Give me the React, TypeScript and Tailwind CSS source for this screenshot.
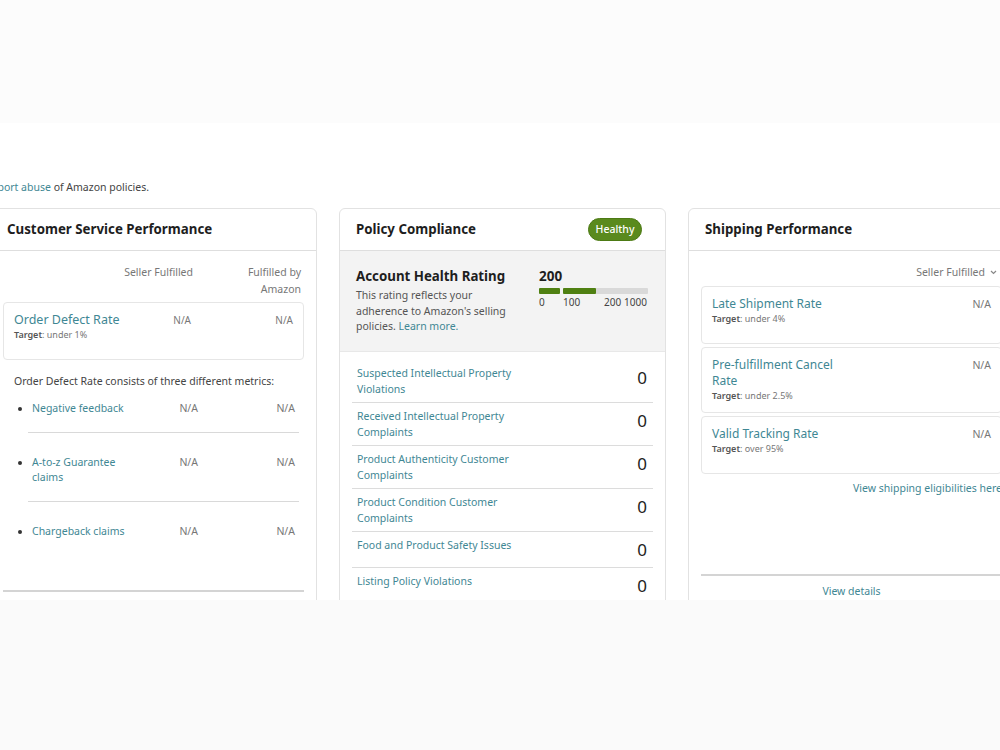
import React from "react";

const link = "text-[#3f8794]";

function Card({ title, right, children }: { title: string; right?: React.ReactNode; children: React.ReactNode }) {
  return (
    <div className="w-[327px] h-[420px] shrink-0 rounded-[6px] border border-[#e2e2e2] bg-white">
      <div className="h-[42px] px-[16px] flex items-center justify-between border-b border-[#dedede]">
        <h2 className="text-[13.3px] font-bold text-[#1e1e1e]">{title}</h2>
        {right}
      </div>
      {children}
    </div>
  );
}

function MetricBox({ name, target, cols }: { name: React.ReactNode; target: string; cols: React.ReactNode }) {
  return (
    <div className="min-h-[58px] rounded-[4px] border border-[#e6e6e6] px-[10px] pt-[9px] pb-[9px] flex items-start">
      <div className="flex-1">
        <div className={`text-[12px] leading-[16px] ${link}`}>{name}</div>
        <div className="text-[9px] leading-[14px] text-[#777]">
          <span className="font-semibold text-[#555]">Target</span>: {target}
        </div>
      </div>
      {cols}
    </div>
  );
}

const subMetrics = [
  { name: "Negative feedback", first: true },
  { name: "A-to-z Guarantee claims", first: false },
  { name: "Chargeback claims", first: false, last: true },
];

const policyRows = [
  "Suspected Intellectual Property Violations",
  "Received Intellectual Property Complaints",
  "Product Authenticity Customer Complaints",
  "Product Condition Customer Complaints",
  "Food and Product Safety Issues",
  "Listing Policy Violations",
];

export default function App() {
  return (
    <div className="w-[1000px] h-[750px] overflow-hidden bg-[#fafafa] font-['Noto_Sans',sans-serif]">
      <div className="h-[123px] bg-[#fcfcfc]" />
      <div className="h-[477px] overflow-hidden bg-white">
        <p className="ml-[-15px] mt-[57px] text-[10.5px] leading-[14px] text-[#444]">
          <span className={link}>Report abuse</span> of Amazon policies.
        </p>

        <div className="ml-[-10px] mt-[14px] flex gap-[22px]">
          {/* Customer service */}
          <Card title="Customer Service Performance">
            <div className="px-[12px]">
              <div className="pt-[13px] mb-[4px] flex justify-end pr-[3px] text-[10.5px] leading-[17px] text-[#777]">
                <div className="w-[90px] text-right">Seller Fulfilled</div>
                <div className="ml-[38px] w-[70px] text-right">Fulfilled by Amazon</div>
              </div>
              <MetricBox
                name={<span className="text-[12.5px]">Order Defect Rate</span>}
                target="under 1%"
                cols={
                  <>
                    <div className="w-[40px] text-right text-[10px] leading-[16px] text-[#777]">N/A</div>
                    <div className="w-[102px] text-right text-[10px] leading-[16px] text-[#777]">N/A</div>
                  </>
                }
              />
              <p className="mt-[14px] pl-[11px] text-[10.5px] leading-[15px] text-[#444]">
                Order Defect Rate consists of three different metrics:
              </p>
              <div className="mr-[5px]">
                {subMetrics.map((m) => (
                  <div key={m.name} className="flex items-start">
                    <div className={m.first ? "w-[25px] pt-[12px] flex justify-center" : "w-[25px] pt-[22px] flex justify-center"}>
                      <span className="mt-[6px] ml-[9px] w-[4px] h-[4px] rounded-full bg-[#333]" />
                    </div>
                    <div
                      className={
                        (m.first ? "pt-[12px] " : "pt-[22px] ") +
                        (m.last ? "pb-[16px] " : "pb-[16px] border-b border-[#d9d9d9] ") +
                        "flex-1 flex items-start pl-[4px] pr-[4px] text-[10.5px] leading-[15px]"
                      }
                    >
                      <div className={`w-[105px] ${link}`}>{m.name}</div>
                      <div className="flex-1 text-right text-[#777]">N/A</div>
                      <div className="w-[97px] text-right text-[#777]">N/A</div>
                    </div>
                  </div>
                ))}
              </div>
              <div className="mt-[35px] h-[2px] bg-[#d4d4d4]" />
            </div>
          </Card>

          {/* Policy compliance */}
          <Card
            title="Policy Compliance"
            right={
              <span className="mr-[7px] h-[23px] w-[54px] rounded-full bg-[#5a8a1d] border border-[#4c7a14] flex items-center justify-center text-[10.5px] font-medium text-white">
                Healthy
              </span>
            }
          >
            <div className="h-[101px] bg-[#f3f3f3] px-[16px] pt-[16px] flex border-b border-[#e8e8e8]">
              <div className="w-[183px] pr-[26px]">
                <div className="text-[13.3px] font-bold leading-[18px] text-[#1e1e1e]">Account Health Rating</div>
                <p className="mt-[3px] text-[10.5px] leading-[15.5px] text-[#555]">
                  This rating reflects your adherence to Amazon's selling policies.{" "}
                  <span className={link}>Learn more.</span>
                </p>
              </div>
              <div className="w-[110px]">
                <div className="text-[13.5px] font-bold leading-[18px] text-[#1e1e1e]">200</div>
                <div className="mt-[3px] flex gap-[3px]">
                  <div className="h-[6px] w-[21px] rounded-[1px] bg-[#4f8012]" />
                  <div className="h-[6px] w-[85px] rounded-[1px] bg-[#d9d9d9] flex">
                    <div className="h-[6px] w-[33px] rounded-[1px] bg-[#4f8012]" />
                  </div>
                </div>
                <div className="mt-[1px] flex text-[10px] leading-[14px] text-[#444]">
                  <span className="w-[24px]">0</span>
                  <span className="w-[41px]">100</span>
                  <span className="w-[20px]">200</span>
                  <span>1000</span>
                </div>
              </div>
            </div>
            <div className="px-[12px] pt-[8px]">
              {policyRows.map((r, i) => (
                <div
                  key={r}
                  className={
                    i === policyRows.length - 1
                      ? "flex items-start pt-[6px] pb-[5px]"
                      : "flex items-start pt-[6px] pb-[5px] border-b border-[#dcdcdc]"
                  }
                >
                  <div className={`w-[200px] pl-[5px] text-[10.5px] leading-[15.5px] ${link}`}>{r}</div>
                  <div className="flex-1 pr-[6px] text-right text-[17px] leading-[24px] text-[#222]">0</div>
                </div>
              ))}
            </div>
          </Card>

          {/* Shipping */}
          <Card title="Shipping Performance">
            <div className="px-[12px]">
              <div className="pt-[13px] mb-[6px] flex justify-end items-center text-[10.5px] leading-[16px] text-[#777]">
                Seller Fulfilled
                <svg className="ml-[5px] mr-[5px]" width="7" height="5" viewBox="0 0 7 5">
                  <path d="M1 1l2.5 2.5L6 1" stroke="#888" strokeWidth="1.2" fill="none" />
                </svg>
              </div>
              <div className="flex flex-col gap-[3px]">
                <MetricBox
                  name="Late Shipment Rate"
                  target="under 4%"
                  cols={<div className="text-[10.5px] leading-[16px] text-[#777]">N/A</div>}
                />
                <MetricBox
                  name={
                    <>
                      Pre-fulfillment Cancel
                      <br />
                      Rate
                    </>
                  }
                  target="under 2.5%"
                  cols={<div className="text-[10.5px] leading-[16px] text-[#777]">N/A</div>}
                />
                <MetricBox
                  name="Valid Tracking Rate"
                  target="over 95%"
                  cols={<div className="text-[10.5px] leading-[16px] text-[#777]">N/A</div>}
                />
              </div>
              <div className={`mt-[6px] text-right text-[10.5px] leading-[16px] ${link}`}>View shipping eligibilities here</div>
              <div className="mt-[78px] h-[2px] bg-[#d4d4d4]" />
              <div className={`mt-[7px] text-center text-[10.5px] leading-[16px] ${link}`}>View details</div>
            </div>
          </Card>
        </div>
      </div>
    </div>
  );
}
